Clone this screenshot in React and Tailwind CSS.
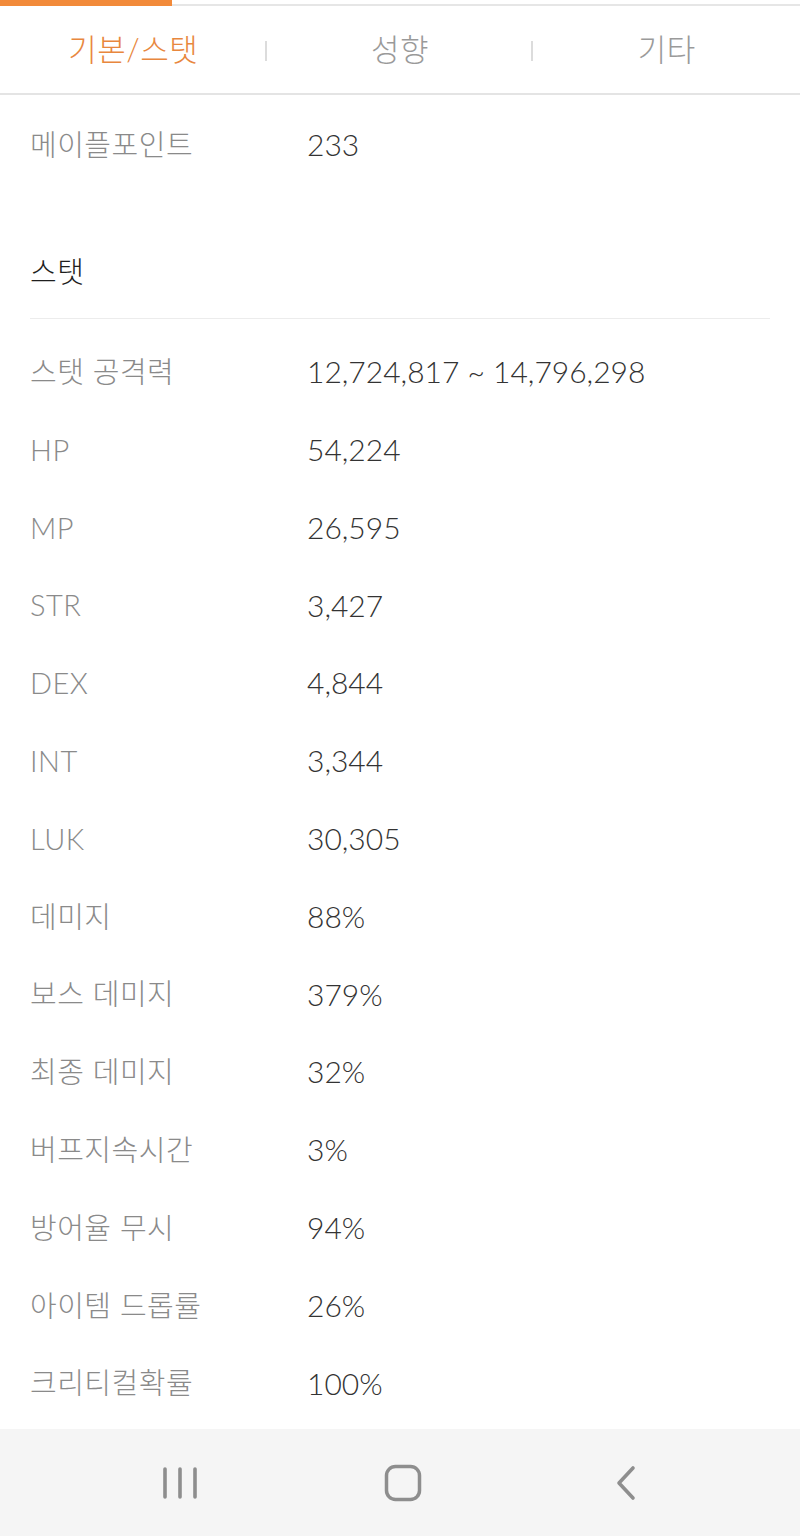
const font = { fontFamily: 'Lato, "Noto Sans CJK KR", sans-serif' };

const stats = [
  ["스탯 공격력", "12,724,817 ~ 14,796,298"],
  ["HP", "54,224"],
  ["MP", "26,595"],
  ["STR", "3,427"],
  ["DEX", "4,844"],
  ["INT", "3,344"],
  ["LUK", "30,305"],
  ["데미지", "88%"],
  ["보스 데미지", "379%"],
  ["최종 데미지", "32%"],
  ["버프지속시간", "3%"],
  ["방어율 무시", "94%"],
  ["아이템 드롭률", "26%"],
  ["크리티컬확률", "100%"],
];

const Row = ({ label, value }) => (
  <div className="flex items-center h-[77.8px]">
    <span className="w-[277px] text-[29px] tracking-[0.5px] text-[#8a8a8a] font-light">{label}</span>
    <span className="text-[30px] text-[#333] font-light">{value}</span>
  </div>
);

const App = () => {
  return (
    <div className="w-[800px] h-[1536px] bg-white flex flex-col" style={font}>
      {/* top progress */}
      <div className="flex items-end h-[6px]">
        <div className="w-[172px] h-[6px] bg-[#f28a3a]" />
        <div className="flex-1 h-[2px] bg-[#e6e6e6]" />
      </div>

      {/* tabs */}
      <div className="grid grid-cols-3 h-[89px] border-b-2 border-[#e4e4e4] text-[31px] font-light">
        <div className="relative flex items-center justify-center text-[#e8873e] tracking-[0.5px]">
          기본/스탯
          <span className="absolute right-0 top-[35px] w-[2px] h-[20px] bg-[#dcdcdc]" />
        </div>
        <div className="relative flex items-center justify-center text-[#9a9a9a] tracking-[0.5px]">
          성향
          <span className="absolute right-0 top-[35px] w-[2px] h-[20px] bg-[#dcdcdc]" />
        </div>
        <div className="flex items-center justify-center text-[#9a9a9a] tracking-[0.5px]">기타</div>
      </div>

      <div className="flex-1 px-[30px] pt-[11px]">
        <Row label="메이플포인트" value="233" />

        <div className="h-[135px] flex items-end pb-[24px] border-b border-[#ececec]">
          <span className="text-[29px] font-light text-[#1e1e1e] tracking-[0.5px]">스탯</span>
        </div>

        <div className="pt-[14px]">
          {stats.map(([l, v]) => (
            <Row key={l} label={l} value={v} />
          ))}
        </div>
      </div>

      {/* android nav */}
      <div className="h-[107px] bg-[#f5f5f5] flex items-center pl-[150px] gap-[163px]">
        <div className="w-[60px] flex justify-center">
          <svg width="36" height="34" viewBox="0 0 36 34">
            <g stroke="#8e8e8e" strokeWidth="3.6" strokeLinecap="round">
              <line x1="3" y1="3" x2="3" y2="31" />
              <line x1="18" y1="3" x2="18" y2="31" />
              <line x1="33" y1="3" x2="33" y2="31" />
            </g>
          </svg>
        </div>
        <div className="w-[60px] flex justify-center">
          <svg width="38" height="38" viewBox="0 0 38 38">
            <rect x="2.5" y="2.5" width="33" height="33" rx="9" fill="none" stroke="#8e8e8e" strokeWidth="3.5" />
          </svg>
        </div>
        <div className="w-[60px] flex justify-center">
          <svg width="24" height="36" viewBox="0 0 24 36">
            <polyline points="19,3 5,18 19,33" fill="none" stroke="#8e8e8e" strokeWidth="3.6" strokeLinecap="round" strokeLinejoin="round" />
          </svg>
        </div>
      </div>
    </div>
  );
};

export default App;
